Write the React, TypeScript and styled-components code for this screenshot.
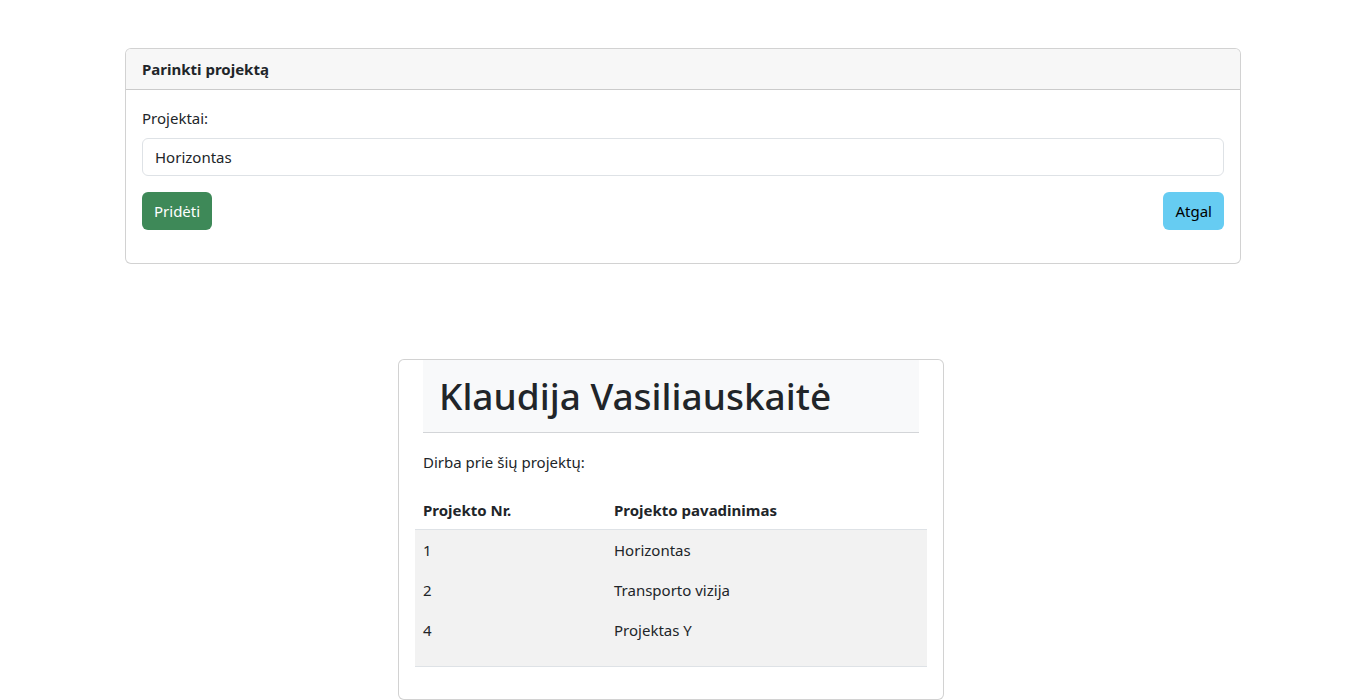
import React from "react";
import styled, { createGlobalStyle } from "styled-components";

const GlobalStyle = createGlobalStyle`
  * { box-sizing: border-box; }
  body {
    margin: 0;
    font-family: "Noto Sans", "Open Sans", sans-serif;
    font-size: 15px;
    line-height: 24px;
    color: #212529;
    background: #fff;
  }
`;

const projects = [
  { nr: 1, name: "Horizontas" },
  { nr: 2, name: "Transporto vizija" },
  { nr: 4, name: "Projektas Y" },
];

const App = () => {
  return (
    <>
      <GlobalStyle />
      <Page>
        <Card>
          <CardHeader>Parinkti projektą</CardHeader>
          <CardBody>
            <Label>Projektai:</Label>
            <Select>Horizontas</Select>
            <ButtonRow>
              <Button $variant="success">Pridėti</Button>
              <Button $variant="info">Atgal</Button>
            </ButtonRow>
          </CardBody>
        </Card>

        <EmployeeCard>
          <NameBlock>
            <Name>Klaudija Vasiliauskaitė</Name>
          </NameBlock>
          <Intro>Dirba prie šių projektų:</Intro>
          <Table>
            <thead>
              <tr>
                <Th $width={191}>Projekto Nr.</Th>
                <Th>Projekto pavadinimas</Th>
              </tr>
            </thead>
            <TBody>
              {projects.map((p) => (
                <tr key={p.nr}>
                  <Td>{p.nr}</Td>
                  <Td>{p.name}</Td>
                </tr>
              ))}
              <SpacerRow>
                <td colSpan={2} />
              </SpacerRow>
            </TBody>
          </Table>
        </EmployeeCard>
      </Page>
    </>
  );
};

const Page = styled.div`
  width: 1116px;
  margin: 0 auto;
  padding-top: 48px;
`;

const Card = styled.div`
  border: 1px solid rgba(0, 0, 0, 0.175);
  border-radius: 6px;
  background: #fff;
`;

const CardHeader = styled.div`
  padding: 8px 16px;
  background: #f7f7f7;
  border-bottom: 1px solid rgba(0, 0, 0, 0.175);
  border-radius: 5px 5px 0 0;
  font-weight: 700;
  line-height: 24px;
`;

const CardBody = styled.div`
  padding: 16px 16px 33px;
`;

const Label = styled.div`
  margin-bottom: 8px;
`;

const Select = styled.div`
  height: 38px;
  padding: 6px 12px;
  border: 1px solid #dee2e6;
  border-radius: 6px;
`;

const ButtonRow = styled.div`
  display: flex;
  justify-content: space-between;
  margin-top: 16px;
`;

const Button = styled.button<{ $variant: "success" | "info" }>`
  height: 38px;
  padding: 6px 12px;
  border: none;
  border-radius: 6px;
  font-family: inherit;
  font-size: 15px;
  line-height: 24px;
  background: ${(p) => (p.$variant === "success" ? "#3e8958" : "#66ccf2")};
  color: ${(p) => (p.$variant === "success" ? "#fff" : "#000")};
`;

const EmployeeCard = styled(Card)`
  width: 546px;
  margin: 95px 0 32px 273px;
  padding-bottom: 32px;
`;

const NameBlock = styled.div`
  margin: 0 24px;
  padding: 12px 16px;
  background: #f8f9fa;
  border-bottom: 1px solid #d3d5d8;
`;

const Name = styled.h1`
  margin: 0;
  font-size: 37px;
  font-weight: 500;
  line-height: 48px;
`;

const Intro = styled.p`
  margin: 17px 24px 16px;
`;

const Table = styled.table`
  width: 512px;
  margin: 0 16px;
  border-collapse: collapse;
`;

const Th = styled.th<{ $width?: number }>`
  width: ${(p) => (p.$width ? `${p.$width}px` : "auto")};
  padding: 8px 8px 7px;
  text-align: left;
  font-weight: 700;
  line-height: 24px;
  border-bottom: 1px solid #dee2e6;
`;

const TBody = styled.tbody`
  background: #f2f2f2;
  border-bottom: 1px solid #dee2e6;
`;

const Td = styled.td`
  padding: 8px;
  line-height: 24px;
`;

const SpacerRow = styled.tr`
  td {
    height: 16px;
    padding: 0;
  }
`;

export default App;
